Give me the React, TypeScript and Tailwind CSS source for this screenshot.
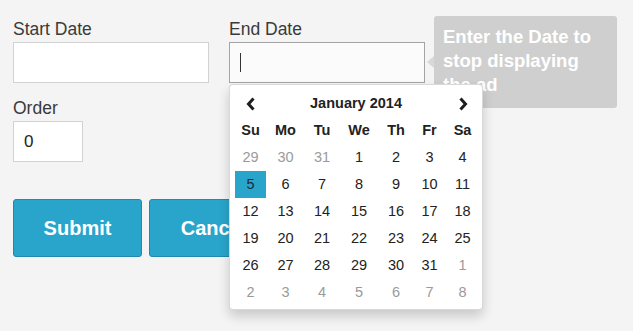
import React from "react";

type Cell = { d: number; muted?: boolean; active?: boolean };

const rows: Cell[][] = [
  [{ d: 29, muted: true }, { d: 30, muted: true }, { d: 31, muted: true }, { d: 1 }, { d: 2 }, { d: 3 }, { d: 4 }],
  [{ d: 5, active: true }, { d: 6 }, { d: 7 }, { d: 8 }, { d: 9 }, { d: 10 }, { d: 11 }],
  [{ d: 12 }, { d: 13 }, { d: 14 }, { d: 15 }, { d: 16 }, { d: 17 }, { d: 18 }],
  [{ d: 19 }, { d: 20 }, { d: 21 }, { d: 22 }, { d: 23 }, { d: 24 }, { d: 25 }],
  [{ d: 26 }, { d: 27 }, { d: 28 }, { d: 29 }, { d: 30 }, { d: 31 }, { d: 1, muted: true }],
  [2, 3, 4, 5, 6, 7, 8].map((d) => ({ d, muted: true })),
];

const days = ["Su", "Mo", "Tu", "We", "Th", "Fr", "Sa"];

function Chevron({ dir }: { dir: "left" | "right" }) {
  return (
    <svg width="10" height="14" viewBox="0 0 10 14">
      <polyline
        points={dir === "left" ? "7.5,1.5 2.5,7 7.5,12.5" : "2.5,1.5 7.5,7 2.5,12.5"}
        fill="none"
        stroke="#1e1e1e"
        strokeWidth="3"
      />
    </svg>
  );
}

export default function App() {
  return (
    <div className="relative w-[633px] h-[331px] overflow-hidden bg-[#f4f4f4] pl-[13px] pt-[19px] font-['Liberation_Sans',Arial,sans-serif]">
      <div className="flex gap-[20px]">
        <div className="flex flex-col w-[196px]">
          <label className="text-[17.5px] leading-[20px] text-[#3a3a3a] mb-[3px]">Start Date</label>
          <div className="h-[41px] border border-[#d2d2d2] bg-white"></div>
        </div>
        <div className="flex flex-col w-[196px]">
          <label className="text-[17.5px] leading-[20px] text-[#3a3a3a] mb-[3px]">End Date</label>
          <div className="h-[41px] border border-[#a4a4a4] bg-[#fbfbfb] flex items-center pl-[10px]">
            <span className="w-[1px] h-[19px] bg-[#333]"></span>
          </div>
        </div>
      </div>

      <div className="mt-[15px] flex flex-col">
        <label className="text-[17.5px] leading-[20px] text-[#3a3a3a] mb-[3px]">Order</label>
        <div className="w-[70px] h-[41px] border border-[#d2d2d2] bg-white flex items-center pl-[10px] text-[17px] text-[#222]">
          0
        </div>
      </div>

      <div className="mt-[37px] flex gap-[7px]">
        <button className="w-[129px] h-[58px] rounded-[3px] border border-[#2189ae] bg-[#29a5cb] text-white text-[20px] font-bold">
          Submit
        </button>
        <button className="w-[129px] h-[58px] rounded-[3px] border border-[#2189ae] bg-[#29a5cb] text-white text-[20px] font-bold">
          Cancel
        </button>
      </div>

      {/* Tooltip */}
      <div className="absolute left-[434px] top-[16px] w-[183px] h-[92px] rounded-[3px] bg-[#cfcfcf] pl-[9px] pr-[9px] pt-[9px] text-white text-[18.5px] font-bold leading-[24px]">
        <span className="absolute left-[-7px] top-[40px] w-0 h-0 border-y-[6px] border-y-transparent border-r-[7px] border-r-[#d8d8d8]"></span>
        Enter the Date to stop displaying the ad
      </div>

      {/* Datepicker dropdown */}
      <div className="absolute left-[229px] top-[84px] w-[254px] h-[226px] rounded-[4px] border border-black/15 bg-white pl-[5px] pt-[5px] shadow-[0_6px_12px_rgba(0,0,0,0.18)] text-[14.5px] text-[#222]">
        <div className="grid grid-cols-[31px_39px_34px_40px_34px_33px_33px] auto-rows-[27px]">
          <div className="flex items-center justify-center">
            <Chevron dir="left" />
          </div>
          <div className="col-span-5 flex items-center justify-center font-bold">January 2014</div>
          <div className="flex items-center justify-center">
            <Chevron dir="right" />
          </div>
          {days.map((d) => (
            <div key={d} className="flex items-center justify-center font-bold">
              {d}
            </div>
          ))}
          {rows.flat().map((c, i) => (
            <div
              key={i}
              className={
                c.active
                  ? "flex items-center justify-center bg-[#29a5cb] text-[#1c2c36]"
                  : c.muted
                  ? "flex items-center justify-center text-[#9a9a9a]"
                  : "flex items-center justify-center text-[#222]"
              }
            >
              {c.d}
            </div>
          ))}
        </div>
      </div>
    </div>
  );
}
